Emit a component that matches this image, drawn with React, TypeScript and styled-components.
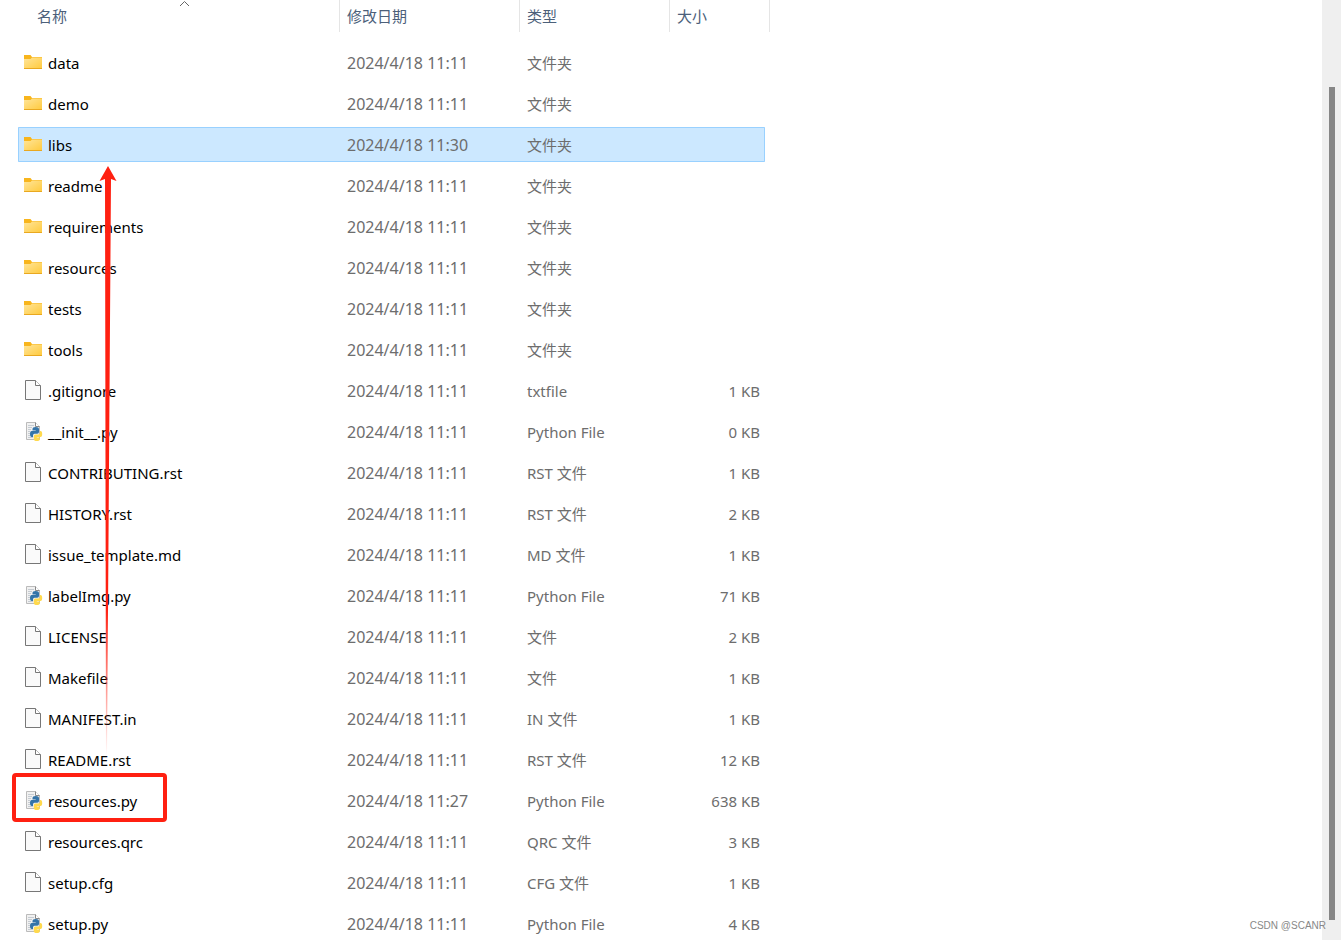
import React from "react";
import styled, { createGlobalStyle, css } from "styled-components";

const GlobalStyle = createGlobalStyle`
  * { box-sizing: border-box; }
  body {
    margin: 0;
    background: #fff;
    font-family: "Noto Sans", "Noto Sans CJK SC", sans-serif;
    font-size: 15px;
    line-height: 20px;
  }
`;

const COLUMNS = "321px 180px 150px 96px";

const Window = styled.div`
  position: relative;
  display: flex;
  height: 100vh;
  overflow: hidden;
`;

const Content = styled.main`
  position: relative;
  flex: 1;
  min-width: 0;
  overflow: hidden;
  padding-left: 18px;
`;

const FileTable = styled.table`
  display: block;
`;

const Head = styled.thead`
  display: block;
  margin-bottom: 13px;
`;

const HeadRow = styled.tr`
  display: grid;
  grid-template-columns: 322px 180px 150px 100px;
`;

const HeadCell = styled.th<{ $first?: boolean }>`
  position: relative;
  height: 32px;
  padding: 6px 0 6px ${(p) => (p.$first ? 19 : 7)}px;
  border-right: 1px solid #e5e5e5;
  color: #4c607a;
  font-weight: 400;
  text-align: left;
`;

const SortMark = styled.svg`
  position: absolute;
  top: 0;
  left: 50%;
  width: 12px;
  height: 8px;
`;

const Body = styled.tbody`
  display: grid;
  gap: 6px;
`;

const Row = styled.tr<{ $selected?: boolean }>`
  display: grid;
  grid-template-columns: ${COLUMNS};
  align-items: center;
  width: 747px;
  height: 35px;
  ${(p) =>
    p.$selected &&
    css`
      background: #cce8ff;
      box-shadow: inset 0 0 0 1px #99d1ff;
      border-radius: 1px;
    `}
`;

const NameCell = styled.td`
  display: flex;
  align-items: center;
  gap: 5px;
  padding: 0 0 0 5px;
  color: #000;
`;

const InfoCell = styled.td`
  padding: 0 0 0 8px;
  color: #6d6d6d;
`;

const DateCell = styled(InfoCell)`
  font-size: 16px;
`;

const SizeCell = styled(InfoCell)`
  padding: 0 5px 0 0;
  text-align: right;
`;

const Icon = styled.svg`
  flex: none;
  width: 20px;
  height: 24px;
`;

const ScrollTrack = styled.div`
  display: flex;
  justify-content: center;
  width: 19px;
  padding: 87px 0 20px;
  background: #efefef;
`;

const ScrollThumb = styled.div`
  width: 6px;
  background: #868686;
`;

const Arrow = styled.svg`
  position: absolute;
  top: 166px;
  left: 98px;
  width: 20px;
  height: 590px;
`;

const Highlight = styled.div`
  position: absolute;
  top: 773px;
  left: 12px;
  width: 155px;
  height: 49px;
  border: 4px solid #ff2011;
  border-radius: 4px;
`;

const Watermark = styled.span`
  position: absolute;
  right: 15px;
  bottom: 6px;
  color: #888;
  font-family: "Liberation Sans", sans-serif;
  font-size: 10px;
  line-height: 16px;
`;

type Kind = "folder" | "file" | "python";

const FolderIcon = () => (
  <Icon viewBox="0 0 20 24" aria-hidden="true">
    <defs>
      <linearGradient id="folder" x1="0" y1="0" x2="1" y2="1">
        <stop offset="0" stopColor="#ffe59a" />
        <stop offset="1" stopColor="#ffca3e" />
      </linearGradient>
    </defs>
    <path d="M1 4h6.500l1.500 2h10v4H1z" fill="#f8b51c" />
    <path d="M1 8h6.500l1.500-1.500h10V17.500H1z" fill="url(#folder)" />
    <path d="M1 17h18v1H1z" fill="#e9a820" />
  </Icon>
);

const PageIcon = () => (
  <Icon viewBox="0 0 20 24" aria-hidden="true">
    <path d="M2.500 1.500h10l5 5v14h-15z" fill="#fafafa" stroke="#777" />
    <path d="M12.500 1.500v5h5" fill="#fff" stroke="#777" />
  </Icon>
);

const PythonIcon = () => (
  <Icon viewBox="0 0 20 24" aria-hidden="true">
    <path d="M3.500 2.500h9l4 4v13h-13z" fill="#f1f1f1" stroke="#bbb" />
    <path d="M12.500 2.500v4h4" fill="#fff" stroke="#888" />
    <path d="M5 5.500h6M5 7.500h4M5 9.500h3M5 11.500h2M5 13.500h2M5 15.500h2M5 17.500h5" stroke="#c6ccd2" />
    <path d="M9.500 9q0-2 3.200-2t3.300 2v3q0 1.700-1.800 1.700h-2.700q-1.500 0-1.500 1.800V17H8.700Q7 17 7 14t1.700-3h4v-.6H9.500z" fill="#3474a8" />
    <path d="M17 11h.5q1.700 0 1.700 3t-1.700 3h-3.700v.6h3V19q0 2-3 2t-3-2v-2.700q0-1.700 1.700-1.700h2.700q1.800 0 1.800-1.800z" fill="#ffd94d" />
  </Icon>
);

const icons: Record<Kind, () => React.ReactElement> = {
  folder: FolderIcon,
  file: PageIcon,
  python: PythonIcon,
};

interface Entry {
  name: string;
  kind: Kind;
  type: string;
  size?: string;
  time?: string;
  selected?: boolean;
}

const folder = (name: string): Entry => ({ name, kind: "folder", type: "文件夹" });
const file = (name: string, type: string, size: string): Entry => ({ name, kind: "file", type, size });
const python = (name: string, size: string): Entry => ({ name, kind: "python", type: "Python File", size });

const entries: Entry[] = [
  folder("data"),
  folder("demo"),
  { ...folder("libs"), time: "11:30", selected: true },
  folder("readme"),
  folder("requirements"),
  folder("resources"),
  folder("tests"),
  folder("tools"),
  file(".gitignore", "txtfile", "1 KB"),
  python("__init__.py", "0 KB"),
  file("CONTRIBUTING.rst", "RST 文件", "1 KB"),
  file("HISTORY.rst", "RST 文件", "2 KB"),
  file("issue_template.md", "MD 文件", "1 KB"),
  python("labelImg.py", "71 KB"),
  file("LICENSE", "文件", "2 KB"),
  file("Makefile", "文件", "1 KB"),
  file("MANIFEST.in", "IN 文件", "1 KB"),
  file("README.rst", "RST 文件", "12 KB"),
  { ...python("resources.py", "638 KB"), time: "11:27" },
  file("resources.qrc", "QRC 文件", "3 KB"),
  file("setup.cfg", "CFG 文件", "1 KB"),
  python("setup.py", "4 KB"),
];

const FileRow = ({ entry }: { entry: Entry }) => {
  const KindIcon = icons[entry.kind];
  return (
    <Row $selected={entry.selected}>
      <NameCell>
        <KindIcon />
        {entry.name}
      </NameCell>
      <DateCell>2024/4/18 {entry.time ?? "11:11"}</DateCell>
      <InfoCell>{entry.type}</InfoCell>
      <SizeCell>{entry.size}</SizeCell>
    </Row>
  );
};

export default function App() {
  return (
    <>
      <GlobalStyle />
      <Window>
        <Content>
          <FileTable>
            <Head>
              <HeadRow>
                <HeadCell $first>
                  名称
                  <SortMark viewBox="0 0 12 8" aria-hidden="true">
                    <path d="M1 6l4.500-4.500L10 6" fill="none" stroke="#666" />
                  </SortMark>
                </HeadCell>
                <HeadCell>修改日期</HeadCell>
                <HeadCell>类型</HeadCell>
                <HeadCell>大小</HeadCell>
              </HeadRow>
            </Head>
            <Body>
              {entries.map((entry) => (
                <FileRow key={entry.name} entry={entry} />
              ))}
            </Body>
          </FileTable>
          <Arrow viewBox="0 0 20 590" aria-hidden="true">
            <defs>
              <linearGradient id="fade" x1="0" y1="0" x2="0" y2="1">
                <stop offset="0" stopColor="#ff2011" />
                <stop offset="0.750" stopColor="#ff2011" />
                <stop offset="1" stopColor="#ff2011" stopOpacity="0" />
              </linearGradient>
            </defs>
            <path d="M10 0L18.500 15L13 13L9 590H8L7 13L1.500 15z" fill="url(#fade)" />
          </Arrow>
          <Highlight />
        </Content>
        <ScrollTrack>
          <ScrollThumb />
        </ScrollTrack>
        <Watermark>CSDN @SCANR</Watermark>
      </Window>
    </>
  );
}
